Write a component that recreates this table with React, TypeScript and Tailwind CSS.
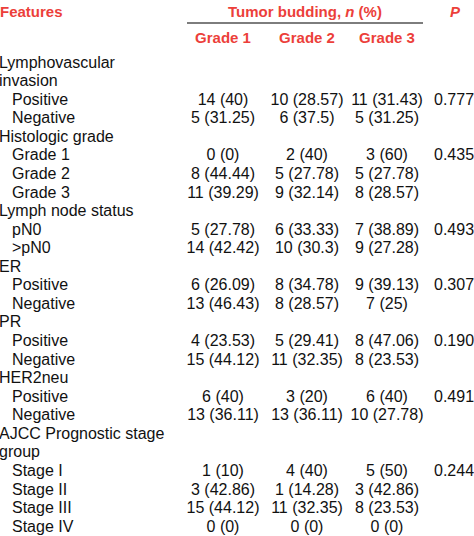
const sections: { title: string[]; p: string; rows: [string, string, string, string][] }[] = [
  {
    title: ["Lymphovascular", "invasion"],
    p: "0.777",
    rows: [
      ["Positive", "14 (40)", "10 (28.57)", "11 (31.43)"],
      ["Negative", "5 (31.25)", "6 (37.5)", "5 (31.25)"],
    ],
  },
  {
    title: ["Histologic grade"],
    p: "0.435",
    rows: [
      ["Grade 1", "0 (0)", "2 (40)", "3 (60)"],
      ["Grade 2", "8 (44.44)", "5 (27.78)", "5 (27.78)"],
      ["Grade 3", "11 (39.29)", "9 (32.14)", "8 (28.57)"],
    ],
  },
  {
    title: ["Lymph node status"],
    p: "0.493",
    rows: [
      ["pN0", "5 (27.78)", "6 (33.33)", "7 (38.89)"],
      [">pN0", "14 (42.42)", "10 (30.3)", "9 (27.28)"],
    ],
  },
  {
    title: ["ER"],
    p: "0.307",
    rows: [
      ["Positive", "6 (26.09)", "8 (34.78)", "9 (39.13)"],
      ["Negative", "13 (46.43)", "8 (28.57)", "7 (25)"],
    ],
  },
  {
    title: ["PR"],
    p: "0.190",
    rows: [
      ["Positive", "4 (23.53)", "5 (29.41)", "8 (47.06)"],
      ["Negative", "15 (44.12)", "11 (32.35)", "8 (23.53)"],
    ],
  },
  {
    title: ["HER2neu"],
    p: "0.491",
    rows: [
      ["Positive", "6 (40)", "3 (20)", "6 (40)"],
      ["Negative", "13 (36.11)", "13 (36.11)", "10 (27.78)"],
    ],
  },
  {
    title: ["AJCC Prognostic stage", "group"],
    p: "0.244",
    rows: [
      ["Stage I", "1 (10)", "4 (40)", "5 (50)"],
      ["Stage II", "3 (42.86)", "1 (14.28)", "3 (42.86)"],
      ["Stage III", "15 (44.12)", "11 (32.35)", "8 (23.53)"],
      ["Stage IV", "0 (0)", "0 (0)", "0 (0)"],
    ],
  },
];

const cols = "grid grid-cols-[181px_84px_84px_76px_49px]";

export default function App() {
  return (
    <div
      className="w-[474px] h-[536px] overflow-hidden bg-white leading-[18.57px] text-[#111]"
      style={{ fontFamily: '"Liberation Sans", Arial, sans-serif' }}
    >
      {/* header */}
      <div className={`${cols} text-[15px] font-bold text-[#ec3f3a]`}>
        <div className="h-[24px] pt-[3px]">Features</div>
        <div className="col-span-3 h-[24px] pt-[3px] flex flex-col">
          <div className="text-center pl-[4px]">
            Tumor budding, <span className="italic">n</span> (%)
          </div>
          <div className="mt-auto ml-[6px] mr-[2px] h-[2px] bg-[#7d7d7d]" />
        </div>
        <div className="h-[24px] pt-[3px] pl-[25px] italic">P</div>

        <div className="h-[29.6px] pt-[5px]" />
        <div className="pt-[5px] text-center">Grade 1</div>
        <div className="pt-[5px] text-center">Grade 2</div>
        <div className="pt-[5px] text-center">Grade 3</div>
        <div />
      </div>

      {/* body */}
      <div className={`${cols} text-[16px]`}>
        {sections.map((s) => (
          <>
            <div key={s.title[0]} className="col-span-5 -ml-[1px] whitespace-nowrap">
              {s.title.map((t, i) => (
                <div key={i}>{t}</div>
              ))}
            </div>
            {s.rows.map((r, i) => (
              <>
                <div key={s.title[0] + r[0]} className="pl-[12px] whitespace-nowrap">
                  {r[0]}
                </div>
                <div className="text-center whitespace-nowrap">{r[1]}</div>
                <div className="text-center whitespace-nowrap">{r[2]}</div>
                <div className="text-center whitespace-nowrap">{r[3]}</div>
                <div className="pl-[9px] whitespace-nowrap">{i === 0 ? s.p : ""}</div>
              </>
            ))}
          </>
        ))}
      </div>
    </div>
  );
}
